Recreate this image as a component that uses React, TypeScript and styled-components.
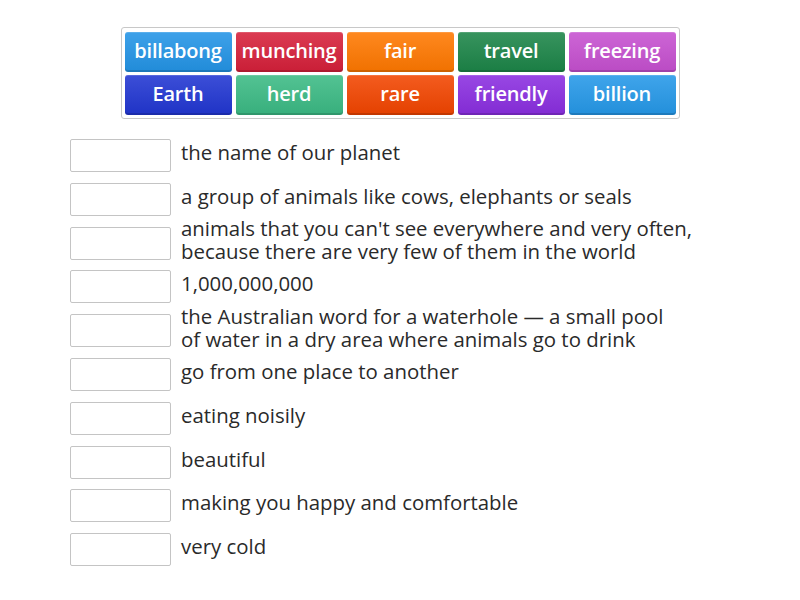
import React from 'react';
import styled, { createGlobalStyle } from 'styled-components';

const GlobalStyle = createGlobalStyle`
  body {
    margin: 0;
    background: #ffffff;
    font-family: "Open Sans", "Noto Sans", sans-serif;
  }
`;

const Page = styled.div`
  width: 800px;
  height: 600px;
  padding-top: 27px;
  box-sizing: border-box;
  overflow: hidden;
`;

const WordBank = styled.div`
  width: 559px;
  margin: 0 auto;
  box-sizing: border-box;
  border: 1px solid #c8c8c8;
  border-radius: 3px;
  padding: 4px 3px 3px 3px;
  display: grid;
  grid-template-columns: repeat(5, 107px);
  grid-auto-rows: 40px;
  column-gap: 4px;
  row-gap: 3px;
`;

const Tile = styled.div<{ $color: string }>`
  display: flex;
  align-items: center;
  justify-content: center;
  border-radius: 3px;
  background: ${p => p.$color};
  background-image: linear-gradient(to bottom, rgba(255, 255, 255, 0.12), rgba(0, 0, 0, 0.06));
  box-shadow: inset 0 -2px 0 rgba(0, 0, 0, 0.14), inset 0 1px 0 rgba(255, 255, 255, 0.15);
  color: #ffffff;
  font-size: 20px;
  font-weight: 600;
  letter-spacing: -0.2px;
  padding-bottom: 4px;
  box-sizing: border-box;
`;

const List = styled.div`
  margin: 20px 0 0 70px;
  display: flex;
  flex-direction: column;
  gap: 10.8px;
`;

const Row = styled.div`
  display: flex;
  align-items: center;
  height: 33px;
  gap: 10px;
`;

const Slot = styled.div`
  flex: none;
  width: 101px;
  height: 33px;
  box-sizing: border-box;
  border: 1px solid #c4c4c4;
  border-radius: 2px;
  background: #ffffff;
`;

const Definition = styled.div`
  font-size: 20.4px;
  line-height: 23px;
  color: #2a2a2a;
  white-space: nowrap;
  margin-top: -6px;
`;

const words: [string, string][] = [
  ['billabong', '#2394e6'],
  ['munching', '#d6203a'],
  ['fair', '#ff7800'],
  ['travel', '#1c8548'],
  ['freezing', '#c650d0'],
  ['Earth', '#2136d2'],
  ['herd', '#3bba84'],
  ['rare', '#f24500'],
  ['friendly', '#8a2ee0'],
  ['billion', '#2598e8'],
];

const definitions: string[][] = [
  ['the name of our planet'],
  ['a group of animals like cows, elephants or seals'],
  ["animals that you can't see everywhere and very often,", 'because there are very few of them in the world'],
  ['1,000,000,000'],
  ['the Australian word for a waterhole \u2014 a small pool', 'of water in a dry area where animals go to drink'],
  ['go from one place to another'],
  ['eating noisily'],
  ['beautiful'],
  ['making you happy and comfortable'],
  ['very cold'],
];

export default function App() {
  return (
    <>
      <GlobalStyle />
      <Page>
        <WordBank>
          {words.map(([w, c]) => (
            <Tile key={w} $color={c}>{w}</Tile>
          ))}
        </WordBank>
        <List>
          {definitions.map((lines, idx) => (
            <Row key={'#' + idx}>
              <Slot />
              <Definition>
                {lines.map((l, i) => (
                  <div key={i}>{l}</div>
                ))}
              </Definition>
            </Row>
          ))}
        </List>
      </Page>
    </>
  );
}
